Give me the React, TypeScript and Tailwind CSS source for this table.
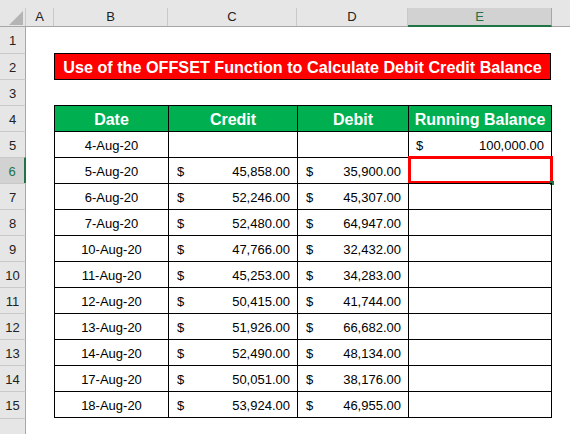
import React from "react";

type Row = { date: string; credit: string; debit: string; balance?: string };

const rows: Row[] = [
  { date: "4-Aug-20", credit: "", debit: "", balance: "100,000.00" },
  { date: "5-Aug-20", credit: "45,858.00", debit: "35,900.00" },
  { date: "6-Aug-20", credit: "52,246.00", debit: "45,307.00" },
  { date: "7-Aug-20", credit: "52,480.00", debit: "64,947.00" },
  { date: "10-Aug-20", credit: "47,766.00", debit: "32,432.00" },
  { date: "11-Aug-20", credit: "45,253.00", debit: "34,283.00" },
  { date: "12-Aug-20", credit: "50,415.00", debit: "41,744.00" },
  { date: "13-Aug-20", credit: "51,926.00", debit: "66,682.00" },
  { date: "14-Aug-20", credit: "52,490.00", debit: "48,134.00" },
  { date: "17-Aug-20", credit: "50,051.00", debit: "38,176.00" },
  { date: "18-Aug-20", credit: "53,924.00", debit: "46,955.00" },
];

function RowHead({ n, active }: { n: number; active?: boolean }) {
  return (
    <div
      className={`flex w-[26px] shrink-0 items-center justify-center border-r pt-[2px] text-[13px] ${
        n > 1 ? "border-t border-t-[#c9c9c9]" : ""
      } ${active ? "border-r-2 border-r-[#217346] bg-[#d2d2d2] text-[#217346]" : "border-r-[#a6a6a6] bg-[#e6e6e6] text-[#222]"}`}
    >
      {n}
    </div>
  );
}

function Money({ value, pl }: { value: string; pl: string }) {
  if (!value) return null;
  return (
    <div className={`flex w-full items-center justify-between pr-[7px] pt-[2px] ${pl}`}>
      <span>$</span>
      <span>{value}</span>
    </div>
  );
}

export default function App() {
  const cols = [
    { l: "A", w: "w-[28px]" },
    { l: "B", w: "w-[114px]" },
    { l: "C", w: "w-[129px]" },
    { l: "D", w: "w-[111px]" },
  ];
  return (
    <div className="h-[434px] w-[570px] overflow-hidden bg-white font-['Liberation_Sans',Arial,sans-serif] text-black">
      {/* column headers */}
      <div className="flex h-[27px] border-b border-[#a6a6a6] bg-[#e6e6e6] pt-[8px]">
        <div className="relative w-[26px] shrink-0 border-r border-[#c9c9c9]">
          <svg className="absolute left-[9px] top-[3px]" width="14" height="14" viewBox="0 0 14 14">
            <polygon points="14,0 14,14 0,14" fill="#b4b4b4" />
          </svg>
        </div>
        {cols.map((c) => (
          <div
            key={c.l}
            className={`flex ${c.w} shrink-0 items-center justify-center border-r border-[#c9c9c9] text-[13px] text-[#222]`}
          >
            {c.l}
          </div>
        ))}
        <div className="-mb-[1px] flex w-[144px] shrink-0 items-center justify-center border-b-2 border-r border-b-[#217346] border-r-[#a6a6a6] bg-[#d2d2d2] text-[13px] text-[#217346]">
          E
        </div>
        <div className="flex-1" />
      </div>

      {/* row 1 */}
      <div className="flex h-[26px]">
        <RowHead n={1} />
      </div>

      {/* row 2: title */}
      <div className="flex h-[26px]">
        <RowHead n={2} />
        <div className="w-[28px] shrink-0 border-t border-t-transparent" />
        <div className="relative z-10 flex h-[27px] w-[497px] shrink-0 items-center justify-center border border-black bg-[#ff0000] pt-[1px] text-[16.2px] font-bold text-white">
          Use of the OFFSET Function to Calculate Debit Credit Balance
        </div>
      </div>

      {/* row 3 */}
      <div className="flex h-[26px]">
        <RowHead n={3} />
      </div>

      {/* row 4: table header */}
      <div className="flex h-[26px]">
        <RowHead n={4} />
        <div className="w-[28px] shrink-0" />
        <div className="flex w-[114px] shrink-0 items-center justify-center border-l border-t border-black bg-[#00b050] pt-[2px] text-[16px] font-bold text-white">
          Date
        </div>
        <div className="flex w-[129px] shrink-0 items-center justify-center border-l border-t border-black bg-[#00b050] pt-[2px] text-[16px] font-bold text-white">
          Credit
        </div>
        <div className="flex w-[111px] shrink-0 items-center justify-center border-l border-t border-black bg-[#00b050] pt-[2px] text-[16px] font-bold text-white">
          Debit
        </div>
        <div className="flex w-[144px] shrink-0 items-center justify-center border-x border-t border-black bg-[#00b050] pt-[2px] text-[16px] font-bold text-white">
          Running Balance
        </div>
      </div>

      {/* rows 5-15: data */}
      {rows.map((r, i) => {
        const n = i + 5;
        const last = i === rows.length - 1;
        const b = `border-l border-t border-black ${last ? "border-b" : ""}`;
        return (
          <div key={n} className={`flex ${last ? "h-[27px]" : "h-[26px]"}`}>
            <RowHead n={n} active={n === 6} />
            <div className="w-[28px] shrink-0" />
            <div className={`flex w-[114px] shrink-0 items-center justify-center pt-[2px] text-[13px] ${b}`}>
              {r.date}
            </div>
            <div className={`flex w-[129px] shrink-0 items-center text-[13px] ${b}`}>
              <Money value={r.credit} pl="pl-[8px]" />
            </div>
            <div className={`flex w-[111px] shrink-0 items-center text-[13px] ${b}`}>
              <Money value={r.debit} pl="pl-[8px]" />
            </div>
            <div className={`relative flex w-[144px] shrink-0 items-center border-r text-[13px] ${b}`}>
              {r.balance && <Money value={r.balance} pl="pl-[7px]" />}
              {n === 6 && (
                <>
                  <div className="absolute -left-[1px] -top-[2px] h-[28px] w-[145px] border-[3px] border-[#ff0000]" />
                  <div className="absolute -bottom-[2px] -right-[3px] h-[4px] w-[4px] bg-[#217346]" />
                </>
              )}
            </div>
          </div>
        );
      })}
      <div className="flex h-[20px]">
        <div className="w-[26px] shrink-0 border-r border-t border-r-[#a6a6a6] border-t-[#c9c9c9] bg-[#e6e6e6]" />
      </div>
    </div>
  );
}
